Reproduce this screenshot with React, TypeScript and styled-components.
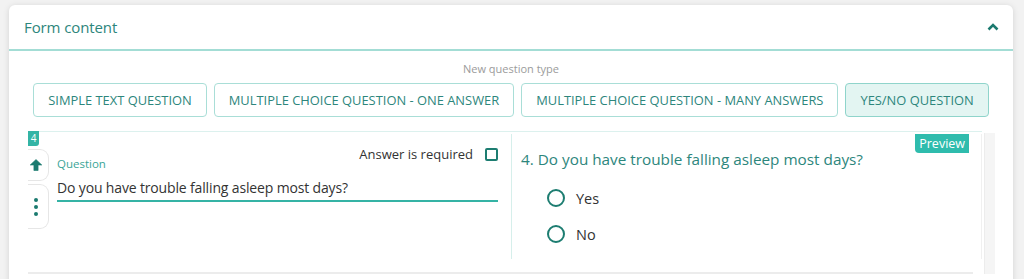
import styled, { createGlobalStyle } from 'styled-components';

const GlobalStyle = createGlobalStyle`
  body {
    margin: 0;
    background: #f2f2f2;
    font-family: 'Open Sans', 'Liberation Sans', sans-serif;
    overflow: hidden;
  }
`;

const questionTypes = [
  { label: 'Simple text question', active: false },
  { label: 'Multiple choice question - one answer', active: false },
  { label: 'Multiple choice question - many answers', active: false },
  { label: 'Yes/No question', active: true },
];

const answers = ['Yes', 'No'];

export default function App() {
  return (
    <Page>
      <GlobalStyle />
      <Card>
        <Header>
          <Title>Form content</Title>
          <svg width="12" height="8" viewBox="0 0 12 8">
            <path d="M1.5 6.5 L6 2 L10.5 6.5" fill="none" stroke="#1b7a6f" strokeWidth="2.6" />
          </svg>
        </Header>

        <Body>
          <TypeCaption>New question type</TypeCaption>
          <TypeRow>
            {questionTypes.map((t) => (
              <TypeButton key={t.label} $active={t.active}>
                {t.label}
              </TypeButton>
            ))}
          </TypeRow>

          <ScrollArea>
            <Questions>
              <QuestionRow>
                <SideTabs>
                  <NumberBadge>4</NumberBadge>
                  <SideTab $height={30}>
                    <svg width="12" height="12" viewBox="0 0 12 12">
                      <path
                        d="M6 0.5 L11.8 6 L8.1 6 L8.1 11.5 L3.9 11.5 L3.9 6 L0.2 6 Z"
                        fill="#1b7a6f"
                        stroke="#1b7a6f"
                        strokeWidth="0.6"
                        strokeLinejoin="round"
                      />
                    </svg>
                  </SideTab>
                  <SideTab $height={43}>
                    <Dots>
                      <Dot />
                      <Dot />
                      <Dot />
                    </Dots>
                  </SideTab>
                </SideTabs>

                <Editor>
                  <EditorTop>
                    <FieldLabel>Question</FieldLabel>
                    <Required>
                      Answer is required
                      <Checkbox />
                    </Required>
                  </EditorTop>
                  <QuestionInput>Do you have trouble falling asleep most days?</QuestionInput>
                </Editor>

                <Preview>
                  <PreviewBadge>Preview</PreviewBadge>
                  <PreviewTitle>4. Do you have trouble falling asleep most days?</PreviewTitle>
                  <RadioList>
                    {answers.map((a) => (
                      <RadioItem key={a}>
                        <RadioCircle />
                        {a}
                      </RadioItem>
                    ))}
                  </RadioList>
                </Preview>
              </QuestionRow>
              <RowDivider />
            </Questions>
            <ScrollTrack />
          </ScrollArea>
        </Body>
      </Card>
    </Page>
  );
}

const Page = styled.div`
  padding: 5px 11px 0 9px;
  height: 279px;
  box-sizing: border-box;
`;

const Card = styled.div`
  background: #fff;
  border-radius: 6px 6px 0 0;
  box-shadow: 0 1px 6px rgba(0, 0, 0, 0.13);
  height: 300px;
`;

const Header = styled.div`
  display: flex;
  align-items: center;
  justify-content: space-between;
  height: 44px;
  padding: 0 14px 0 15px;
  border-bottom: 2px solid #a3ddd5;
`;

const Title = styled.span`
  font-size: 15px;
  letter-spacing: -0.1px;
  color: #2d867c;
`;

const Body = styled.div`
  display: flex;
  flex-direction: column;
  padding-top: 11px;
`;

const TypeCaption = styled.div`
  text-align: center;
  font-size: 11px;
  line-height: 14px;
  color: #9b9b9b;
`;

const TypeRow = styled.div`
  display: flex;
  justify-content: center;
  gap: 7px;
  margin-top: 7px;
`;

const TypeButton = styled.button<{ $active: boolean }>`
  height: 34px;
  padding: 0 14px;
  font-family: inherit;
  font-size: 12.9px;
  text-transform: uppercase;
  color: #2d867c;
  background: ${({ $active }) => ($active ? '#e3f5f2' : '#fff')};
  border: 1px solid ${({ $active }) => ($active ? '#8fd4cb' : '#a9ded7')};
  border-radius: 4px;
`;

const ScrollArea = styled.div`
  display: flex;
  margin: 14px 18px 0 19px;
  gap: 2px;
`;

const Questions = styled.div`
  flex: 1;
  border-top: 1px solid #dcf1ee;
`;

const ScrollTrack = styled.div`
  width: 10px;
  margin-top: 2px;
  background: #f5f5f5;
  border-left: 1px solid #ececec;
`;

const QuestionRow = styled.div`
  display: flex;
  height: 127px;
`;

const SideTabs = styled.div`
  display: flex;
  flex-direction: column;
  width: 21px;
  gap: 3px;
`;

const NumberBadge = styled.div`
  width: 11px;
  height: 15px;
  margin-top: -1px;
  background: #33b4a5;
  color: #fff;
  font-size: 10px;
  line-height: 15px;
  text-align: center;
  border-bottom-right-radius: 3px;
`;

const SideTab = styled.div<{ $height: number }>`
  height: ${({ $height }) => $height}px;
  display: flex;
  align-items: center;
  justify-content: center;
  padding-right: 5px;
  border: 1px solid #e6e6e6;
  border-left: none;
  border-radius: 0 9px 9px 0;
`;

const Dots = styled.div`
  display: flex;
  flex-direction: column;
  gap: 3px;
`;

const Dot = styled.span`
  width: 4px;
  height: 4px;
  border-radius: 50%;
  background: #1b7a6f;
`;

const Editor = styled.div`
  width: 441px;
  margin-left: 8px;
  padding-top: 12px;
`;

const EditorTop = styled.div`
  display: flex;
  justify-content: space-between;
  height: 28px;
`;

const FieldLabel = styled.span`
  align-self: flex-end;
  font-size: 11.5px;
  line-height: 16px;
  color: #3aa597;
`;

const Required = styled.label`
  display: flex;
  align-items: center;
  gap: 12px;
  height: 20px;
  font-size: 13px;
  color: #333;
`;

const Checkbox = styled.span`
  width: 13px;
  height: 13px;
  box-sizing: border-box;
  border: 2px solid #1d7d71;
  border-radius: 2px;
`;

const QuestionInput = styled.div`
  margin-top: 6px;
  font-size: 14px;
  letter-spacing: -0.15px;
  line-height: 20px;
  padding-bottom: 2px;
  color: #333;
  border-bottom: 2px solid #35b3a5;
`;

const Preview = styled.div`
  position: relative;
  flex: 1;
  margin: 2px 0 0 13px;
  padding: 14px 0 0 9px;
  border-left: 1px solid #d6efeb;
  border-right: 1px solid #f0f0f0;
`;

const PreviewBadge = styled.span`
  position: absolute;
  top: 0;
  right: 12px;
  padding: 0 4px;
  height: 19px;
  line-height: 19px;
  font-size: 12.5px;
  color: #fff;
  background: #2fbcad;
  border-bottom-left-radius: 4px;
`;

const PreviewTitle = styled.div`
  font-size: 15.3px;
  line-height: 22px;
  color: #2d867c;
`;

const RadioList = styled.div`
  display: flex;
  flex-direction: column;
  margin: 10px 0 0 26px;
`;

const RadioItem = styled.label`
  display: flex;
  align-items: center;
  gap: 11px;
  height: 36px;
  font-size: 14.5px;
  color: #333;
`;

const RadioCircle = styled.span`
  width: 18px;
  height: 18px;
  box-sizing: border-box;
  border: 2px solid #1d7d71;
  border-radius: 50%;
`;

const RowDivider = styled.div`
  height: 2px;
  margin: 13px 9px 0 0;
  background: #ececec;
`;
